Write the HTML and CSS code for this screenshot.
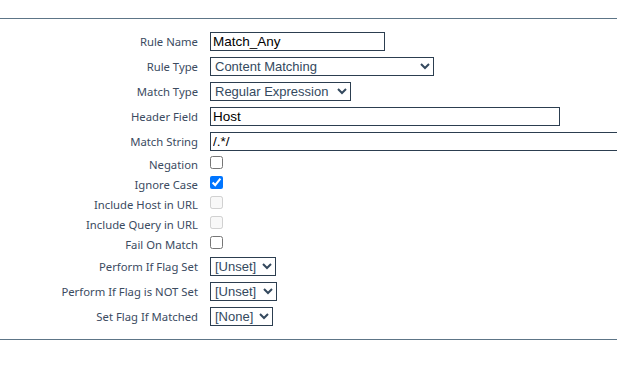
FILE: index.html
```html
<!DOCTYPE html>
<html>
<head>
<meta charset="utf-8">
<link rel="stylesheet" href="styles.css">
</head>
<body>
<div class="rule"></div>
<form class="form">
  <div class="row">
    <label class="lbl">Rule Name</label>
    <input class="txt w-name" type="text" value="Match_Any">
  </div>
  <div class="row">
    <label class="lbl">Rule Type</label>
    <select class="sel w-type"><option>Content Matching</option></select>
  </div>
  <div class="row">
    <label class="lbl">Match Type</label>
    <select class="sel w-match"><option>Regular Expression</option></select>
  </div>
  <div class="row">
    <label class="lbl">Header Field</label>
    <input class="txt w-header" type="text" value="Host">
  </div>
  <div class="row">
    <label class="lbl">Match String</label>
    <input class="txt w-string" type="text" value="/.*/">
  </div>
  <div class="row row-cb">
    <label class="lbl">Negation</label>
    <input class="cb" type="checkbox">
  </div>
  <div class="row row-cb">
    <label class="lbl">Ignore Case</label>
    <input class="cb" type="checkbox" checked>
  </div>
  <div class="row row-cb">
    <label class="lbl">Include Host in URL</label>
    <input class="cb" type="checkbox" disabled>
  </div>
  <div class="row row-cb">
    <label class="lbl">Include Query in URL</label>
    <input class="cb" type="checkbox" disabled>
  </div>
  <div class="row row-cb">
    <label class="lbl">Fail On Match</label>
    <input class="cb" type="checkbox">
  </div>
  <div class="row">
    <label class="lbl">Perform If Flag Set</label>
    <select class="sel w-f1"><option>[Unset]</option></select>
  </div>
  <div class="row">
    <label class="lbl">Perform If Flag is NOT Set</label>
    <select class="sel w-f2"><option>[Unset]</option></select>
  </div>
  <div class="row">
    <label class="lbl">Set Flag If Matched</label>
    <select class="sel w-f3"><option>[None]</option></select>
  </div>
</form>
<div class="rule rule-bottom"></div>
</body>
</html>
```
FILE: styles.css
```css
html, body {
  margin: 0;
  padding: 0;
  overflow: hidden;
  background: #ffffff;
}
body {
  padding-top: 18px;
  font-family: "Noto Sans", "Open Sans", sans-serif;
}
.rule {
  height: 0;
  border-top: 1px solid #5d7587;
}
.form {
  margin: 10px 0 0 0;
  display: flex;
  flex-direction: column;
  overflow: hidden;
}
.row {
  display: flex;
  align-items: center;
  height: 25px;
}
.row-cb {
  height: 20px;
}
.lbl {
  width: 198px;
  margin-right: 12px;
  text-align: right;
  font-size: 11.3px;
  color: #3b4b5f;
  flex: none;
  white-space: nowrap;
}
.txt {
  box-sizing: border-box;
  height: 19px;
  margin: 0;
  padding: 0 2px;
  border: 1px solid #2c3e50;
  border-radius: 0;
  font-family: "Liberation Sans", Arial, sans-serif;
  font-size: 13.5px;
  color: #000;
  flex: none;
  outline: none;
}
.sel {
  box-sizing: border-box;
  height: 19px;
  margin: 0;
  padding: 0;
  border: 1px solid #2c3e50;
  border-radius: 0;
  background: #fff;
  font-family: "Liberation Sans", Arial, sans-serif;
  font-size: 13px;
  color: #34495e;
  flex: none;
}
.cb {
  width: 13px;
  height: 13px;
  margin: 0 0 3px 0;
  flex: none;
}
.w-name { width: 175px; }
.w-header { width: 350px; }
.w-string { width: 440px; }
.w-type { width: 224px; }
.w-match { width: 141px; }
.w-f1 { width: 66px; }
.w-f2 { width: 67px; }
.w-f3 { width: 63px; }
.rule-bottom {
  margin-top: 10px;
}
```
